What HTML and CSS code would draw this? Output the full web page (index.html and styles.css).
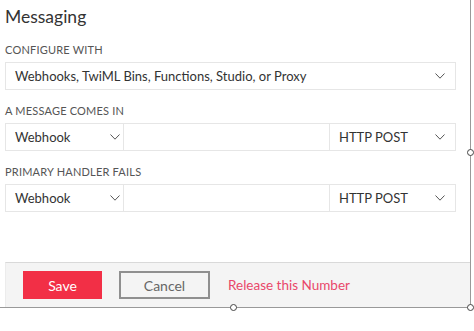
FILE: index.html
```html
<!DOCTYPE html>
<html>
<head>
<meta charset="utf-8">
<link rel="stylesheet" href="styles.css">
</head>
<body>
<div class="page">
  <div class="card">
    <h2 class="title">Messaging</h2>
    <div class="field first">
      <div class="label">CONFIGURE WITH</div>
      <div class="row">
        <div class="select wide"><span>Webhooks, TwiML Bins, Functions, Studio, or Proxy</span>
          <svg class="chev" width="10" height="6" viewBox="0 0 10 6"><polyline points="0.5,0.5 5,5.2 9.5,0.5" fill="none" stroke="#555" stroke-width="1"/></svg>
        </div>
      </div>
    </div>
    <div class="field">
      <div class="label">A MESSAGE COMES IN</div>
      <div class="row">
        <div class="select kind"><span>Webhook</span>
          <svg class="chev" width="10" height="6" viewBox="0 0 10 6"><polyline points="0.5,0.5 5,5.2 9.5,0.5" fill="none" stroke="#555" stroke-width="1"/></svg>
        </div>
        <div class="input"></div>
        <div class="select method"><span>HTTP POST</span>
          <svg class="chev" width="10" height="6" viewBox="0 0 10 6"><polyline points="0.5,0.5 5,5.2 9.5,0.5" fill="none" stroke="#555" stroke-width="1"/></svg>
        </div>
      </div>
    </div>
    <div class="field">
      <div class="label">PRIMARY HANDLER FAILS</div>
      <div class="row">
        <div class="select kind"><span>Webhook</span>
          <svg class="chev" width="10" height="6" viewBox="0 0 10 6"><polyline points="0.5,0.5 5,5.2 9.5,0.5" fill="none" stroke="#555" stroke-width="1"/></svg>
        </div>
        <div class="input"></div>
        <div class="select method"><span>HTTP POST</span>
          <svg class="chev" width="10" height="6" viewBox="0 0 10 6"><polyline points="0.5,0.5 5,5.2 9.5,0.5" fill="none" stroke="#555" stroke-width="1"/></svg>
        </div>
      </div>
    </div>
    <div class="footer">
      <button class="btn save">Save</button>
      <button class="btn cancel">Cancel</button>
      <a class="release">Release this Number</a>
    </div>
  </div>
  <div class="frame">
    <span class="handle h-rm"></span>
    <span class="handle h-bm"></span>
    <span class="handle h-br"></span>
  </div>
</div>
</body>
</html>
```
FILE: styles.css
```css
* { box-sizing: border-box; }
html, body { margin: 0; padding: 0; background: #fff; }
body { font-family: Lato, "Open Sans", sans-serif; color: #333; }
.page { position: relative; width: 474px; height: 331px; overflow: hidden; }
.card { margin-left: 5px; width: 465px; }
.title { margin: 0 0 9px 0; height: 34px; line-height: 34px; font-size: 17.5px; font-weight: normal; color: #333; }
.field { margin-top: 14px; width: 451px; }
.field.first { margin-top: 0; }
.label { height: 14px; line-height: 14px; font-size: 11px; letter-spacing: 0.2px; color: #555; margin-bottom: 5px; }
.row { display: flex; height: 28px; }
.select, .input { height: 28px; border: 1px solid #e6e6e6; background: #fff; }
.select { display: flex; align-items: center; justify-content: space-between; padding-left: 9px; font-size: 13px; color: #333; }
.select.wide { flex: 1; padding-right: 10px; }
.select.kind { width: 119px; padding-right: 3px; }
.select.method { width: 127px; margin-left: -1px; padding-right: 10px; }
.input { flex: 1; margin-left: -1px; }
.chev { display: block; }
.footer { margin-top: 50px; height: 45px; background: #f4f4f4; border-top: 1px solid #d9d9d9; border-left: 1px solid #ececec; display: flex; align-items: flex-start; padding: 8px 0 0 17px; }
.btn { height: 28px; font-family: Lato, "Open Sans", sans-serif; font-size: 14px; padding: 0; cursor: pointer; }
.save { width: 79px; background: #f22f46; color: #fff; border: none; }
.cancel { width: 91px; margin-left: 17px; background: #f4f4f4; color: #666; border: 2px solid #8f8f8f; }
.release { margin-left: 18px; line-height: 28px; font-size: 13.5px; color: #e9476a; }
.frame { position: absolute; left: -3px; top: -3px; width: 474px; height: 311px; border: 1px solid #999; pointer-events: none; }
.handle { position: absolute; width: 7px; height: 7px; border: 1px solid #444; border-radius: 50%; background: #fff; }
.h-rm { right: -4px; top: 151px; }
.h-bm { left: 232px; bottom: -4px; }
.h-br { right: -4px; bottom: -4px; }
```
